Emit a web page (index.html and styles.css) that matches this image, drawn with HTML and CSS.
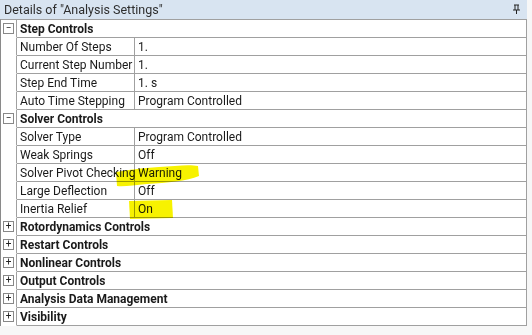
FILE: index.html
```html
<!DOCTYPE html>
<html lang="en">
<head>
  <meta charset="UTF-8" />
  <title>Details of "Analysis Settings"</title>
  <link rel="stylesheet" href="styles.css">
</head>
<body>
  <div class="panel">
    <div class="title">
      <span>Details of "Analysis Settings"</span>
      <svg class="pin" width="9" height="10" viewBox="0 0 9 10">
        <path d="M2 1h5M3 1v5M6 1v5M1 6h7M4.5 6v4" stroke="#222" stroke-width="1" fill="none"/>
      </svg>
    </div>

    <div class="grid">
      <div class="row head"><span class="exp"><i class="box">−</i></span><span class="name">Step Controls</span></div>
      <div class="row"><span class="exp"></span><span class="name">Number Of Steps</span><span class="val">1.</span></div>
      <div class="row"><span class="exp"></span><span class="name">Current Step Number</span><span class="val">1.</span></div>
      <div class="row"><span class="exp"></span><span class="name">Step End Time</span><span class="val">1. s</span></div>
      <div class="row"><span class="exp"></span><span class="name">Auto Time Stepping</span><span class="val">Program Controlled</span></div>

      <div class="row head"><span class="exp"><i class="box">−</i></span><span class="name">Solver Controls</span></div>
      <div class="row"><span class="exp"></span><span class="name">Solver Type</span><span class="val">Program Controlled</span></div>
      <div class="row"><span class="exp"></span><span class="name">Weak Springs</span><span class="val">Off</span></div>
      <div class="row"><span class="exp"></span><span class="name">Solver Pivot Checking</span><span class="val">Warning</span></div>
      <div class="row"><span class="exp"></span><span class="name">Large Deflection</span><span class="val">Off</span></div>
      <div class="row"><span class="exp"></span><span class="name">Inertia Relief</span><span class="val">On</span></div>

      <div class="row head"><span class="exp"><i class="box">+</i></span><span class="name">Rotordynamics Controls</span></div>
      <div class="row head"><span class="exp"><i class="box">+</i></span><span class="name">Restart Controls</span></div>
      <div class="row head"><span class="exp"><i class="box">+</i></span><span class="name">Nonlinear Controls</span></div>
      <div class="row head"><span class="exp"><i class="box">+</i></span><span class="name">Output Controls</span></div>
      <div class="row head"><span class="exp"><i class="box">+</i></span><span class="name">Analysis Data Management</span></div>
      <div class="row head"><span class="exp"><i class="box">+</i></span><span class="name">Visibility</span></div>

      <!-- highlighter marks drawn over the table -->
      <svg class="marker" width="220" height="210" viewBox="0 0 220 210">
        <path d="M115 152 C128 150 140 148 158 147 C174 146 188 144 197 146 L198 156 C186 161 166 163 146 164 C133 165 123 167 116 166 Z" fill="#f7f200"/>
        <path d="M128 181 L171 180 L172 198 L129 199 Z" fill="#f7f200"/>
      </svg>
    </div>
  </div>
</body>
</html>
```

FILE: styles.css
```css
body {
  margin: 0;
  background: #f7f7f7;
  font-family: "Roboto", "Noto Sans", sans-serif;
  font-size: 12px;
  color: #1a1a1a;
}
.panel {
  width: 527px;
  height: 335px;
  background: #f7f7f7;
}
.title {
  height: 19px;
  background: #d8e4f1;
  display: flex;
  align-items: center;
  justify-content: space-between;
  padding: 0 6px 0 4px;
  font-size: 12.5px;
  color: #2e2e2e;
}
.pin {
  margin-bottom: 2px;
}
.grid {
  position: relative;
  border-left: 1px solid #8a8a8a;
  border-right: 1px solid #a0a0a0;
  border-top: 1px solid #a0a0a0;
  background: #fff;
}
.row {
  display: flex;
  height: 17px;
  border-bottom: 1px solid #a0a0a0;
  line-height: 18px;
}
.exp {
  width: 15px;
  flex: none;
  border-right: 1px solid #a0a0a0;
  background: #fff;
  margin-bottom: -1px;
  border-bottom: 1px solid #fff;
  display: flex;
  align-items: center;
  justify-content: center;
}
.box {
  display: block;
  width: 9px;
  height: 9px;
  border: 1px solid #888;
  font-style: normal;
  font-size: 10px;
  line-height: 8px;
  text-align: center;
  color: #222;
}
.name {
  width: 114px;
  flex: none;
  padding-left: 3px;
  border-right: 1px solid #a0a0a0;
  white-space: nowrap;
}
.val {
  padding-left: 3px;
}
.head .name {
  border-right: none;
  font-weight: bold;
  width: auto;
}
.marker {
  position: absolute;
  left: 0;
  top: 0;
  pointer-events: none;
  mix-blend-mode: multiply;
}
```
